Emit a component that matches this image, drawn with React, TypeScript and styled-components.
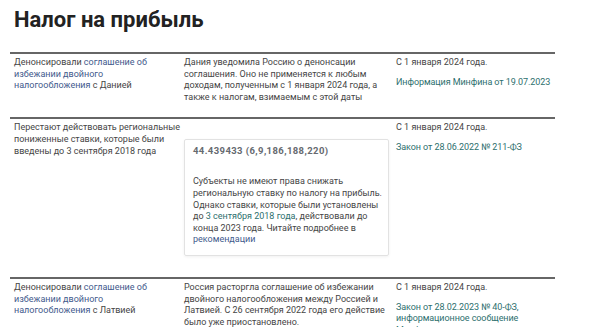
import React from 'react';
import styled, { createGlobalStyle } from 'styled-components';

const GlobalStyle = createGlobalStyle`
    body {
        margin: 0;
        background: #ffffff;
        font-family: Roboto, 'Liberation Sans', sans-serif;
        color: #444444;
    }
`;

type Tone = 'blue' | 'teal';

interface RowData {
    change: React.ReactNode;
    detail: React.ReactNode;
    when: string;
    source: React.ReactNode;
}

const Page = styled.div`
    padding: 6px 43px 0 10px;
    height: 327px;
    overflow: hidden;
    box-sizing: border-box;
`;

const Title = styled.h1`
    margin: 0 0 0 4px;
    font-family: Roboto, 'Liberation Sans', sans-serif;
    font-size: 22px;
    font-weight: 700;
    line-height: 28px;
    color: #222222;
`;

const Table = styled.div`
    margin-top: 18px;
    display: flex;
    flex-direction: column;
`;

const Row = styled.div`
    display: grid;
    grid-template-columns: 170px 212px 1fr;
    border-top: 2px solid #666666;
    padding-bottom: 14px;

    &:nth-child(2) {
        padding-bottom: 21px;
    }
`;

const Cell = styled.div`
    padding: 3px 0 0 4px;
    min-width: 0;
`;

const Text = styled.p`
    margin: 0;
    font-size: 9px;
    line-height: 11.6px;
    color: #454545;
`;

const Source = styled.div`
    margin-top: 8px;
    font-size: 9px;
    line-height: 11.6px;
    letter-spacing: -0.08px;
`;

const Link = styled.a<{ tone: Tone }>`
    color: ${props => (props.tone === 'blue' ? '#3f5a8c' : '#2d6f6e')};
    text-decoration: none;
    cursor: pointer;
`;

const Card = styled.div`
    margin-top: 17px;
    padding: 5px 2px 9px 8px;
    border: 1px solid #e2e2e2;
    border-radius: 2px;
    box-shadow: 0 1px 3px rgba(0, 0, 0, 0.06);
    width: 205px;
    box-sizing: border-box;
`;

const CardTitle = styled.div`
    font-size: 9.5px;
    font-weight: 700;
    letter-spacing: 0.4px;
    color: #666a70;
    line-height: 12px;
    margin-bottom: 19px;
`;

const rows: RowData[] = [
    {
        change: (
            <>
                Денонсировали <Link tone="blue">соглашение об избежании двойного налогообложения</Link> с Данией
            </>
        ),
        detail: (
            <Text>
                Дания уведомила Россию о денонсации соглашения. Оно не применяется к любым доходам, полученным с 1 января 2024 года, а также к налогам, взимаемым с этой даты
            </Text>
        ),
        when: 'С 1 января 2024 года.',
        source: <Link tone="teal">Информация Минфина от 19.07.2023</Link>,
    },
    {
        change: 'Перестают действовать региональные пониженные ставки, которые были введены до 3 сентября 2018 года',
        detail: (
            <Card>
                <CardTitle>44.439433 (6,9,186,188,220)</CardTitle>
                <Text>
                    Субъекты не имеют права снижать региональную ставку по налогу на прибыль. Однако ставки, которые были установлены до{' '}
                    <Link tone="teal">3 сентября 2018 года</Link>, действовали до конца 2023 года. Читайте подробнее в{' '}
                    <Link tone="blue">рекомендации</Link>
                </Text>
            </Card>
        ),
        when: 'С 1 января 2024 года.',
        source: <Link tone="teal">Закон от 28.06.2022 № 211-ФЗ</Link>,
    },
    {
        change: (
            <>
                Денонсировали <Link tone="blue">соглашение об избежании двойного налогообложения</Link> с Латвией
            </>
        ),
        detail: (
            <Text>
                Россия расторгла соглашение об избежании двойного налогообложения между Россией и Латвией. С 26 сентября 2022 года его действие было уже приостановлено.
            </Text>
        ),
        when: 'С 1 января 2024 года.',
        source: <Link tone="teal">Закон от 28.02.2023 № 40-ФЗ, информационное сообщение Минфина</Link>,
    },
];

export default function App() {
    return (
        <Page>
            <GlobalStyle />
            <Title>Налог на прибыль</Title>
            <Table>
                {rows.map((row, i) => (
                    <Row key={i}>
                        <Cell>
                            <Text>{row.change}</Text>
                        </Cell>
                        <Cell>{row.detail}</Cell>
                        <Cell>
                            <Text>{row.when}</Text>
                            <Source>{row.source}</Source>
                        </Cell>
                    </Row>
                ))}
            </Table>
        </Page>
    );
}
